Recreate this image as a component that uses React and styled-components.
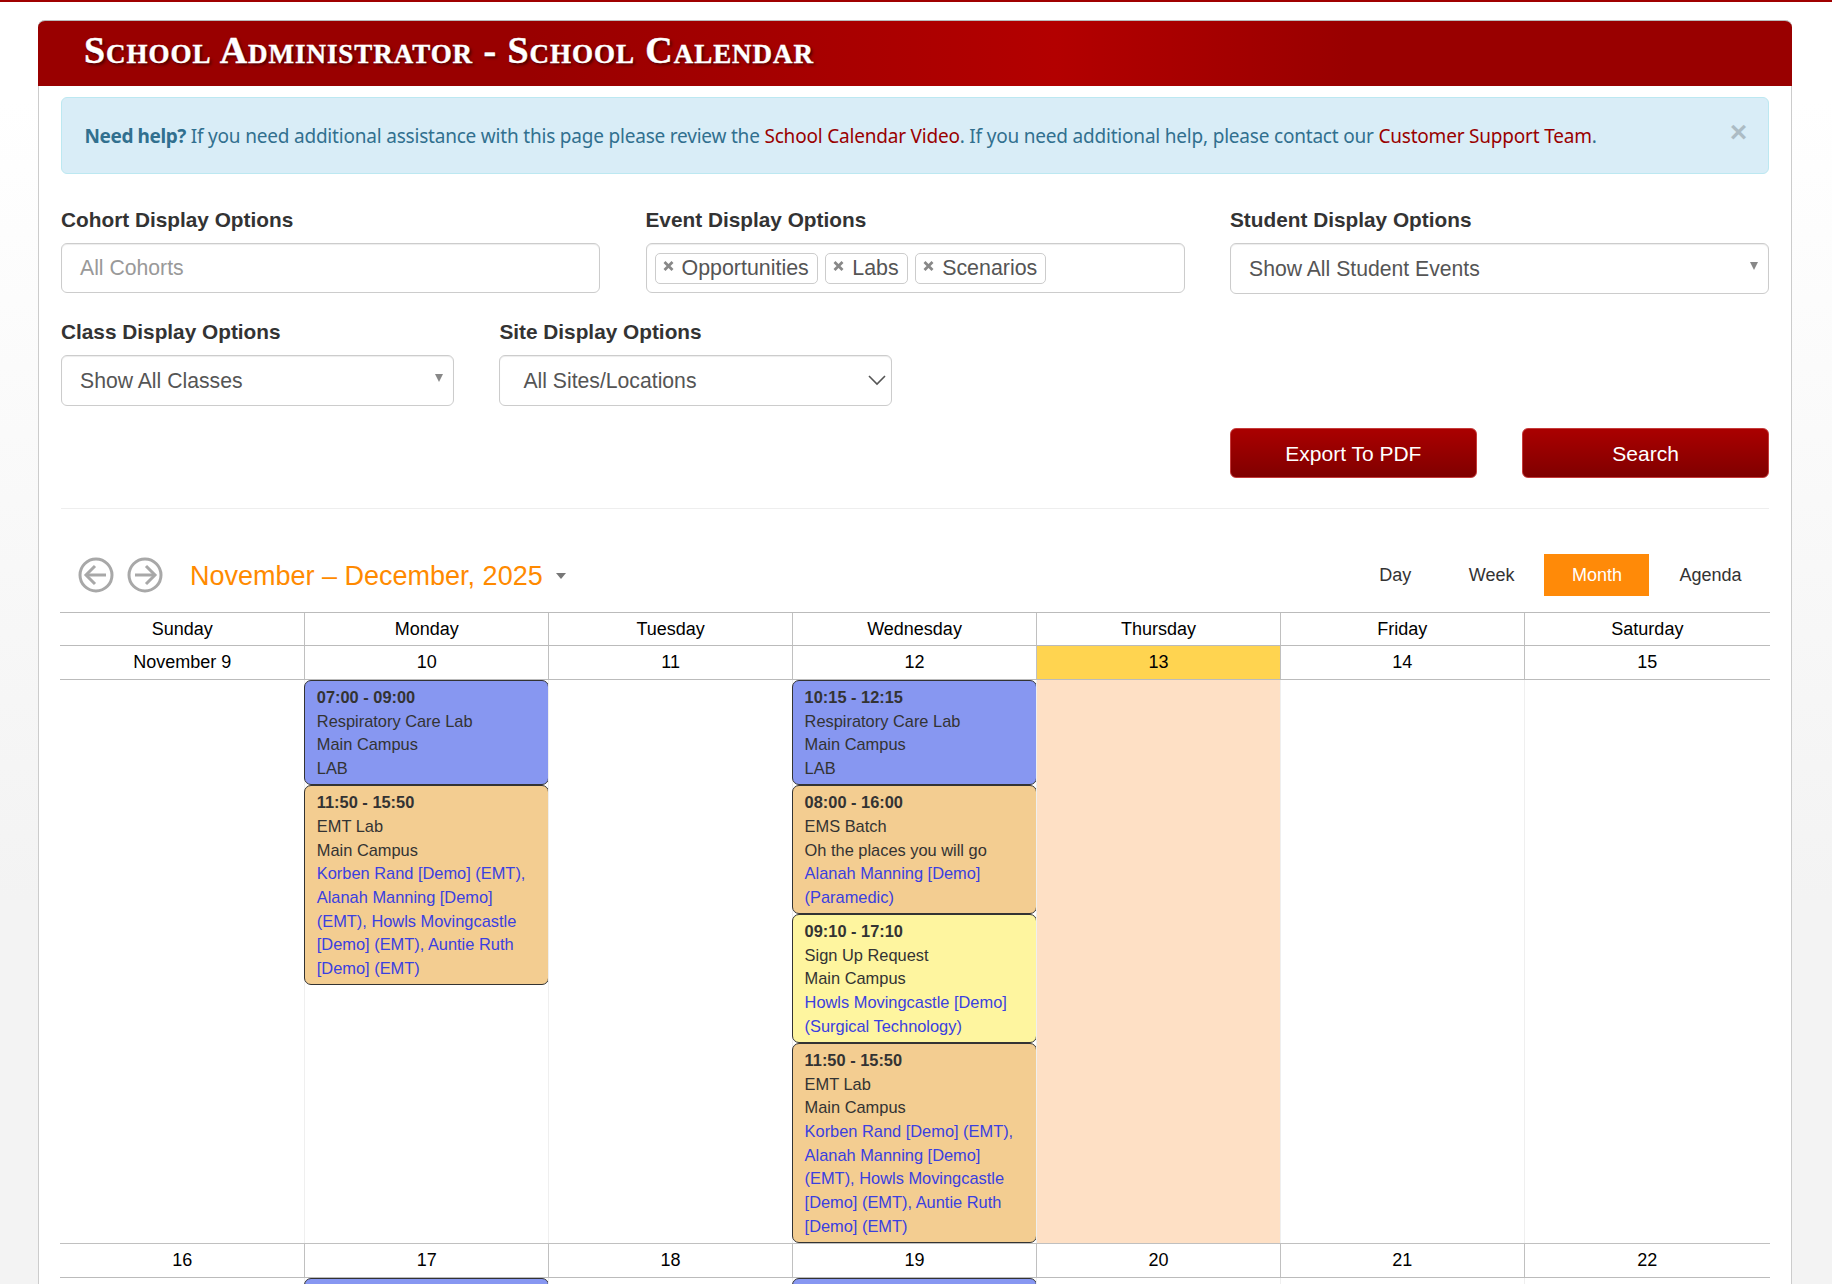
import React from "react";
import styled, { createGlobalStyle } from "styled-components";

const GlobalStyle = createGlobalStyle`
  html, body {
    margin: 0;
    height: 100%;
    overflow: hidden;
  }
  body {
    font-family: "Liberation Sans", Arial, sans-serif;
    color: #333;
    background: linear-gradient(to bottom, #fff 0, #fff 100px, #f3f3f3 900px);
  }
  * { box-sizing: border-box; }
`;

const Page = styled.div`
  height: 1284px;
  overflow: hidden;
  border-top: 2px solid #a00000;
  padding: 18px 40px 0 38px;
`;

const Panel = styled.div`
  width: 1754px;
  min-height: 1400px;
  background: #fff;
  border: 1px solid #ccc;
  border-top: 0;
  border-radius: 7px 7px 0 0;
`;

const PanelHeader = styled.div`
  height: 66px;
  margin: 0 -1px;
  padding: 0 0 8px 46px;
  display: flex;
  align-items: center;
  border-top: 1px solid #bbb;
  border-radius: 7px 7px 0 0;
  background: linear-gradient(to right, #990000 0%, #990000 28%, #b30000 58%, #990000 75%, #990000 100%);
`;

const PanelTitle = styled.h1`
  margin: 0;
  font-family: "Liberation Serif", serif;
  font-variant: small-caps;
  font-size: 38px;
  letter-spacing: 0.95px;
  font-weight: 700;
  color: #fff;
  -webkit-text-stroke: 0.4px #fff;
  text-shadow: 2px 2px 3px rgba(0, 0, 0, 0.55);
`;

const PanelBody = styled.div`
  padding: 11px 22px 0 22px;
`;

const Alert = styled.div`
  position: relative;
  height: 77px;
  padding: 0 22.5px;
  display: flex;
  align-items: center;
  background: #d9edf7;
  border: 1px solid #bce8f1;
  border-radius: 6px;
  color: #31708f;
  font-family: "Noto Sans", sans-serif;
  font-size: 19px;
  letter-spacing: -0.2px;
  white-space: pre;
`;

const AlertLead = styled.b`
  letter-spacing: -0.4px;
`;

const AlertLink = styled.span`
  color: #990000;
`;

const CloseMark = styled.span`
  position: absolute;
  right: 21px;
  top: 19px;
  font-family: "Liberation Sans", sans-serif;
  font-size: 30px;
  font-weight: 700;
  line-height: 1;
  color: #000;
  opacity: 0.2;
`;

const FormRow = styled.div`
  display: grid;
  grid-template-columns: repeat(${({ $cols }) => $cols}, 1fr);
  column-gap: 45.5px;
  margin-top: ${({ $top }) => $top}px;
`;

const Field = styled.div`
  min-width: 0;
`;

const Label = styled.label`
  display: block;
  height: 26px;
  margin-bottom: 10px;
  font-size: 20.8px;
  font-weight: 700;
  line-height: 26px;
  color: #333;
`;

const Box = styled.div`
  position: relative;
  height: ${({ $h }) => $h}px;
  display: flex;
  align-items: center;
  gap: 7.5px;
  padding: 0 ${({ $pad }) => $pad}px;
  background: #fff;
  border: 1px solid #ccc;
  border-radius: 6px;
  box-shadow: inset 0 1px 1px rgba(0, 0, 0, 0.075);
  font-size: 21.2px;
  color: ${({ $muted }) => ($muted ? "#999" : "#555")};
`;

const Tag = styled.span`
  height: 31px;
  display: flex;
  align-items: center;
  gap: 8px;
  padding: 0 8px 0 7px;
  border: 1px solid #ccc;
  border-radius: 5px;
  color: #555;
  font-size: 21.4px;
`;

const TagX = styled.svg`
  display: block;
  transform: translateY(-2px);
`;

const SelectArrow = styled.span`
  position: absolute;
  right: 10px;
  top: 18px;
  border-style: solid;
  border-width: 8px 4.5px 0 4.5px;
  border-color: #888 transparent transparent transparent;
`;

const Chevron = styled.svg`
  position: absolute;
  right: 5px;
  top: 18px;
`;

const ActionButton = styled.button`
  grid-column: ${({ $col }) => $col || "auto"};
  height: 50px;
  padding-top: 2px;
  border: 1px solid #c43a3a;
  border-radius: 6px;
  background: linear-gradient(to bottom, #aa0000, #800000);
  color: #fff;
  font-family: inherit;
  font-size: 21px;
`;

const Divider = styled.hr`
  margin: 30px 0 0;
  border: 0;
  border-top: 1px solid #eee;
`;

const Toolbar = styled.div`
  height: 42px;
  margin-top: 45px;
  display: flex;
  align-items: center;
  gap: 13px;
  padding-left: 17px;
`;

const NavIcon = styled.svg`
  display: block;
`;

const RangeTitle = styled.span`
  margin-left: 14px;
  padding-top: 2px;
  font-size: 27px;
  color: #ff8a00;
`;

const RangeCaret = styled.span`
  margin: 2px 0 0 0;
  border-style: solid;
  border-width: 6px 5px 0 5px;
  border-color: #777 transparent transparent transparent;
`;

const Views = styled.div`
  margin-left: auto;
  display: flex;
  gap: 2.5px;
`;

const ViewButton = styled.span`
  height: 42px;
  padding: 0 27.5px;
  display: flex;
  align-items: center;
  font-size: 18px;
  color: ${({ $active }) => ($active ? "#fff" : "#333")};
  background: ${({ $active }) => ($active ? "#ff8a08" : "transparent")};
`;

const Calendar = styled.div`
  width: 1709.6px;
  margin: 16px 0 0 -0.6px;
  border-top: 1px solid #bbb;
`;

const COLUMNS = "repeat(6, 243.9px) 1fr";

const HeadRow = styled.div`
  display: grid;
  grid-template-columns: ${COLUMNS};
  border-bottom: 1px solid #bbb;
`;

const HeadCell = styled.div`
  height: ${({ $h }) => $h}px;
  display: flex;
  align-items: center;
  justify-content: center;
  font-size: 18px;
  color: #000;
  background: ${({ $today }) => ($today ? "#ffd450" : "transparent")};
  & + & {
    border-left: 1px solid #c0c0c0;
  }
`;

const WeekBody = styled.div`
  display: grid;
  grid-template-columns: ${COLUMNS};
  border-bottom: 1px solid #c0c0c0;
`;

const DayColumn = styled.div`
  min-height: 40px;
  background: ${({ $today }) => ($today ? "#fee0c5" : "transparent")};
  & + & {
    border-left: 1px solid #efefef;
  }
`;

const EVENT_COLORS = { lab: "#8797f1", clinical: "#f3cd91", request: "#fef59f" };

const Event = styled.div`
  margin: 0 -1px 0 -1px;
  padding: 5px 11.5px 3.6px;
  border: 1px solid #333;
  border-radius: 7px;
  background: ${({ $kind }) => EVENT_COLORS[$kind]};
  font-size: 16.4px;
  line-height: 23.65px;
  color: #333;
`;

const EventTime = styled.div`
  font-weight: 700;
`;

const EventStudents = styled.div`
  color: #3a40e0;
`;

const DAYS = ["Sunday", "Monday", "Tuesday", "Wednesday", "Thursday", "Friday", "Saturday"];
const WEEK_ONE = ["November 9", "10", "11", "12", "13", "14", "15"];
const WEEK_TWO = ["16", "17", "18", "19", "20", "21", "22"];

const EMT_STUDENTS =
  "Korben Rand [Demo] (EMT), Alanah Manning [Demo] (EMT), Howls Movingcastle [Demo] (EMT), Auntie Ruth [Demo] (EMT)";

const EMT_LAB = { kind: "clinical", time: "11:50 - 15:50", lines: ["EMT Lab", "Main Campus"], students: EMT_STUDENTS };

const MONDAY = [
  { kind: "lab", time: "07:00 - 09:00", lines: ["Respiratory Care Lab", "Main Campus", "LAB"] },
  EMT_LAB,
];

const WEDNESDAY = [
  { kind: "lab", time: "10:15 - 12:15", lines: ["Respiratory Care Lab", "Main Campus", "LAB"] },
  {
    kind: "clinical",
    time: "08:00 - 16:00",
    lines: ["EMS Batch", "Oh the places you will go"],
    students: "Alanah Manning [Demo] (Paramedic)",
  },
  {
    kind: "request",
    time: "09:10 - 17:10",
    lines: ["Sign Up Request", "Main Campus"],
    students: "Howls Movingcastle [Demo] (Surgical Technology)",
  },
  EMT_LAB,
];

const WEEK_TWO_LAB = [{ kind: "lab", time: "07:00 - 09:00", lines: ["Respiratory Care Lab", "Main Campus", "LAB"] }];

const NavArrow = ({ flip }) => (
  <NavIcon width="36" height="36" viewBox="0 0 36 36" fill="none" stroke="#a8a8a8" strokeWidth="3">
    <circle cx="18" cy="18" r="16" />
    <g transform={flip ? "rotate(180 18 18)" : undefined}>
      <path d="M8 18h20" />
      <path d="M17 9l-9 9 9 9" />
    </g>
  </NavIcon>
);

const OptionTag = ({ children }) => (
  <Tag>
    <TagX width="11" height="10" viewBox="0 0 11 10" stroke="#888" strokeWidth="2.8">
      <path d="M1.5 1l8 8M9.5 1l-8 8" />
    </TagX>
    {children}
  </Tag>
);

const Week = ({ dates, todayIndex, events }) => (
  <>
    <HeadRow>
      {dates.map((date, i) => (
        <HeadCell key={date} $h={33} $today={i === todayIndex}>
          {date}
        </HeadCell>
      ))}
    </HeadRow>
    <WeekBody>
      {dates.map((date, i) => (
        <DayColumn key={date} $today={i === todayIndex}>
          {(events[i] || []).map((event) => (
            <Event key={event.time} $kind={event.kind}>
              <EventTime>{event.time}</EventTime>
              {event.lines.map((line) => (
                <div key={line}>{line}</div>
              ))}
              {event.students && <EventStudents>{event.students}</EventStudents>}
            </Event>
          ))}
        </DayColumn>
      ))}
    </WeekBody>
  </>
);

export default function App() {
  return (
    <>
      <GlobalStyle />
      <Page>
        <Panel>
          <PanelHeader>
            <PanelTitle>School Administrator - School Calendar</PanelTitle>
          </PanelHeader>
          <PanelBody>
            <Alert>
              <AlertLead>Need help?</AlertLead> If you need additional assistance with this page please review the{" "}
              <AlertLink>School Calendar Video</AlertLink>. If you need additional help, please contact our{" "}
              <AlertLink>Customer Support Team</AlertLink>.
              <CloseMark>×</CloseMark>
            </Alert>

            <FormRow $cols={3} $top={33}>
              <Field>
                <Label>Cohort Display Options</Label>
                <Box $h={50} $pad={18} $muted>
                  All Cohorts
                </Box>
              </Field>
              <Field>
                <Label>Event Display Options</Label>
                <Box $h={50} $pad={8}>
                  <OptionTag>Opportunities</OptionTag>
                  <OptionTag>Labs</OptionTag>
                  <OptionTag>Scenarios</OptionTag>
                </Box>
              </Field>
              <Field>
                <Label>Student Display Options</Label>
                <Box $h={51} $pad={18}>
                  Show All Student Events
                  <SelectArrow />
                </Box>
              </Field>
            </FormRow>

            <FormRow $cols={4} $top={25}>
              <Field>
                <Label>Class Display Options</Label>
                <Box $h={51} $pad={18}>
                  Show All Classes
                  <SelectArrow />
                </Box>
              </Field>
              <Field>
                <Label>Site Display Options</Label>
                <Box $h={51} $pad={23}>
                  All Sites/Locations
                  <Chevron width="18" height="12" viewBox="0 0 18 12" fill="none" stroke="#555" strokeWidth="1.6">
                    <path d="M1 2l8 8 8-8" />
                  </Chevron>
                </Box>
              </Field>
            </FormRow>

            <FormRow $cols={6} $top={22}>
              <ActionButton $col={5}>Export To PDF</ActionButton>
              <ActionButton>Search</ActionButton>
            </FormRow>

            <Divider />

            <Toolbar>
              <NavArrow />
              <NavArrow flip />
              <RangeTitle>November – December, 2025</RangeTitle>
              <RangeCaret />
              <Views>
                <ViewButton>Day</ViewButton>
                <ViewButton>Week</ViewButton>
                <ViewButton $active>Month</ViewButton>
                <ViewButton>Agenda</ViewButton>
              </Views>
            </Toolbar>

            <Calendar>
              <HeadRow>
                {DAYS.map((day) => (
                  <HeadCell key={day} $h={32}>
                    {day}
                  </HeadCell>
                ))}
              </HeadRow>
              <Week dates={WEEK_ONE} todayIndex={4} events={{ 1: MONDAY, 3: WEDNESDAY }} />
              <Week dates={WEEK_TWO} events={{ 1: WEEK_TWO_LAB, 3: WEEK_TWO_LAB }} />
            </Calendar>
          </PanelBody>
        </Panel>
      </Page>
    </>
  );
}
